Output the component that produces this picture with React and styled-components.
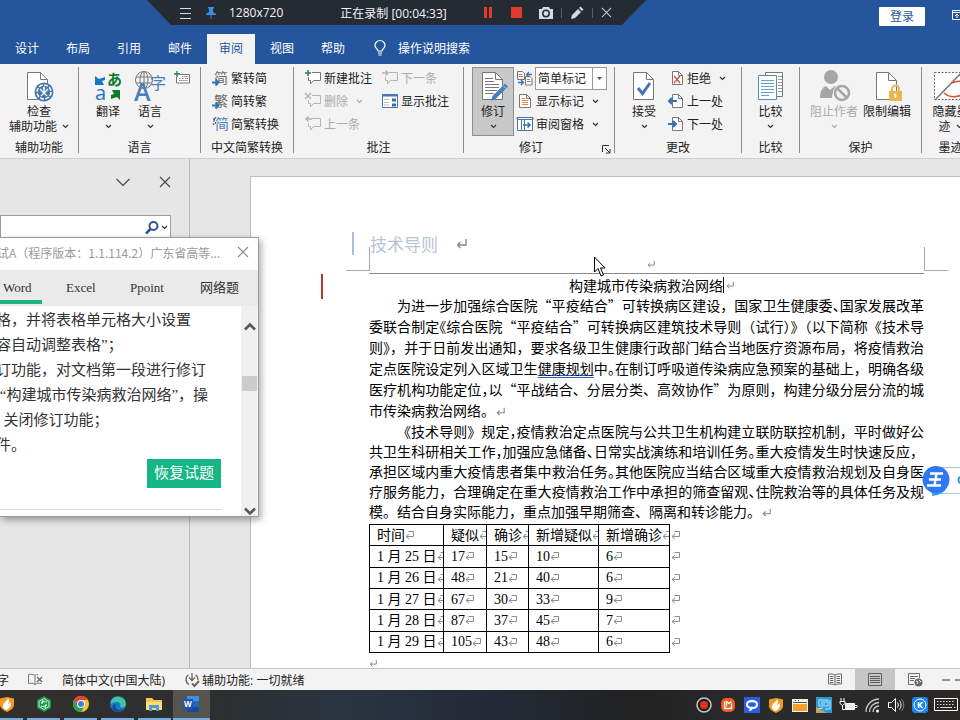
import React from "react";
import styled, { createGlobalStyle, css } from "styled-components";

const UI_FONT = `"Open Sans", "Noto Sans CJK SC", sans-serif`;
const DOC_FONT = `"Noto Sans CJK SC", sans-serif`;
const PAPER_FONT = `"Liberation Serif", "Noto Sans CJK SC", serif`;

const GlobalStyle = createGlobalStyle`
  * {
    box-sizing: border-box;
  }

  body {
    margin: 0;
    overflow: hidden;
    font-family: ${UI_FONT};
    font-size: 12px;
    color: #222;
  }

  button, input, select {
    font: inherit;
    color: inherit;
    margin: 0;
    padding: 0;
    border: 0;
    background: none;
  }

  svg {
    display: block;
    flex: none;
    overflow: visible;
  }
`;

const Screen = styled.div`
  position: relative;
  display: flex;
  flex-direction: column;
  height: 100vh;
  overflow: hidden;
  background: #e6e6e6;
`;

/* ---------- title bar and tabs ---------- */

const Header = styled.header`
  flex: none;
  background: #25569d;
  color: #fff;
`;

const TitleBar = styled.div`
  display: flex;
  justify-content: flex-end;
  gap: 27px;
  height: 34px;
  padding-top: 7px;
`;

const LoginButton = styled.button`
  width: 46px;
  height: 19px;
  line-height: 19px;
  border-radius: 1px;
  background: #fff;
  color: #25569d;
`;

const RibbonOptions = styled.button`
  width: 8px;
  height: 16px;
  overflow: hidden;
`;

const Tabs = styled.nav`
  display: flex;
  gap: 3px;
  height: 30px;
  padding-left: 3px;
`;

const Tab = styled.a`
  width: 48px;
  line-height: 29px;
  text-align: center;
  text-decoration: none;
  color: ${({ $active }) => ($active ? "#25569d" : "#fff")};
  background: ${({ $active }) => ($active ? "#f3f3f3" : "transparent")};
`;

const TellMe = styled.button`
  display: flex;
  align-items: center;
  gap: 12px;
  height: 28px;
  margin-left: 14px;
`;

/* ---------- screen recorder strip ---------- */

const Recorder = styled.div`
  position: absolute;
  top: 0;
  left: 147px;
  display: flex;
  align-items: center;
  width: 499px;
  height: 25px;
  padding-left: 32px;
  background: #252b33;
  color: #f4f4f4;
  clip-path: polygon(0 0, 100% 0, 475px 100%, 24px 100%);
`;

const RecorderIcon = styled.button`
  display: flex;
  width: 25px;
`;

const RecorderTime = styled.span`
  margin: 0 27px 0 57px;
  white-space: nowrap;
`;

const RecorderButton = styled.button`
  display: flex;
  align-items: center;
  justify-content: center;
  width: ${({ $wide }) => ($wide ? "31px" : "28px")};
  height: 10px;
  border-left: 1px solid ${({ $divided }) => ($divided ? "#59606a" : "transparent")};
`;

/* ---------- ribbon ---------- */

const RibbonBar = styled.div`
  flex: none;
  display: flex;
  height: 95px;
  padding: 3px 0 5px;
  overflow: hidden;
  background: #f3f3f3;
  border-bottom: 1px solid #cfcfcf;
`;

const Group = styled.section`
  flex: none;
  display: flex;
  flex-direction: column;
  width: ${({ $width }) => $width}px;
  border-right: 1px solid #8c8c8c;
`;

const GroupBody = styled.div`
  display: flex;
  height: 72px;
  padding-left: ${({ $pad }) => $pad || 0}px;
  justify-content: ${({ $center }) => ($center ? "center" : "flex-start")};
`;

const GroupLabel = styled.div`
  position: relative;
  height: 14px;
  line-height: 17px;
  padding-right: ${({ $launcher }) => ($launcher ? "16px" : 0)};
  text-align: center;
  white-space: nowrap;
`;

const Launcher = styled.button`
  position: absolute;
  right: 3px;
  bottom: -1px;
`;

const Column = styled.div`
  display: flex;
  flex-direction: column;
  gap: 1px;
  width: ${({ $width }) => ($width ? `${$width}px` : "auto")};
`;

const SmallButton = styled.button`
  display: flex;
  align-items: center;
  gap: 3px;
  height: 22px;
  white-space: nowrap;
  color: ${({ disabled }) => (disabled ? "#ababab" : "#222")};

  svg:last-child:not(:first-child) {
    margin-left: 5px;
  }
`;

const InsetButton = styled(SmallButton)`
  padding-left: 3px;
`;

const BigButton = styled.button`
  flex: none;
  display: flex;
  flex-direction: column;
  align-items: center;
  width: ${({ $width }) => $width || 42}px;
  height: 69px;
  padding-top: 4px;
  line-height: 15px;
  white-space: nowrap;
  color: ${({ disabled }) => (disabled ? "#ababab" : "#222")};

  > svg {
    margin-bottom: 1px;
  }

  ${({ $pressed }) =>
    $pressed &&
    css`
      background: #c8c8c8;
      box-shadow: inset 0 0 0 1px #8f8f8f;
    `}
`;

const SecondLine = styled.span`
  display: flex;
  align-items: center;
  gap: 5px;
  height: 15px;
`;

const Combo = styled.label`
  display: flex;
  align-items: center;
  width: 72px;
  height: 23px;
  margin-left: 2px;
  border: 1px solid #9a9a9a;
  background: #fff;

  select {
    width: 57px;
    height: 21px;
    padding-left: 2px;
    appearance: none;
    border-right: 1px solid #9a9a9a;
    outline: 0;
  }

  svg {
    margin-left: 4px;
  }
`;

const ComboRow = styled.div`
  display: flex;
  align-items: center;
  height: 22px;
  padding-left: 3px;
`;

/* ---------- work area ---------- */

const Workspace = styled.main`
  flex: 1;
  display: flex;
  min-height: 0;
  overflow: hidden;
`;

const TaskPane = styled.aside`
  flex: none;
  width: 190px;
  padding: 17px 18px 0 0;
  border-right: 1px solid #b9b9b9;
`;

const PaneActions = styled.div`
  display: flex;
  align-items: flex-start;
  justify-content: flex-end;
  gap: 29px;
  height: 39px;
`;

const SearchBox = styled.label`
  display: flex;
  align-items: center;
  height: 25px;
  padding-right: 2px;
  border: 1px solid #9b9b9b;
  background: #fff;

  input {
    flex: 1;
    min-width: 0;
    outline: 0;
  }
`;

const Canvas = styled.div`
  flex: 1;
  display: flex;
  padding: 17px 0 0 60px;
`;

const Page = styled.article`
  position: relative;
  flex: 1;
  min-width: 0;
  padding: 55px 36px 0 118px;
  border: 1px solid #bdbdbd;
  border-width: 1px 0 0 1px;
  background: #fff;
  font-family: ${DOC_FONT};
  font-size: 14px;
  color: #000;
`;

const PageHead = styled.div`
  display: flex;
  align-items: center;
  gap: 18px;
  height: 22px;
  padding-left: 1px;
  font-size: 17px;
  color: #b6c3d6;
`;

const HeadRule = styled.div`
  display: flex;
  justify-content: center;
  align-items: center;
  height: 20px;
  padding-left: 8px;
  border-bottom: 1px solid #8a8a8a;
`;

const Corner = styled.span`
  position: absolute;
  top: 70px;
  width: 24px;
  height: 24px;
  border: 0 solid #a9a9a9;
  border-bottom-width: 1px;
  ${({ $right }) =>
    $right
      ? "right: 12px; border-left-width: 1px;"
      : "left: 95px; border-right-width: 1px;"}
`;

const ChangeBar = styled.span`
  position: absolute;
  top: ${({ $top }) => $top}px;
  left: ${({ $left }) => $left}px;
  width: 2px;
  height: ${({ $height }) => $height}px;
  background: ${({ $color }) => $color};
`;

const DocTitle = styled.h1`
  display: flex;
  justify-content: center;
  align-items: center;
  gap: 2px;
  height: 21px;
  margin: 0;
  font-size: 14px;
  font-weight: 400;

  span {
    border-right: 1px solid #000;
    line-height: 16px;
  }

  svg {
    margin-right: -10px;
  }
`;

const Paragraph = styled.p`
  margin: 0;
  line-height: ${({ $leading }) => $leading}px;
`;

const Line = styled.span`
  display: block;
  height: ${({ $leading }) => $leading}px;
  padding-left: ${({ $indent }) => ($indent ? "28px" : 0)};
  white-space: nowrap;
  text-align: justify;
  text-align-last: ${({ $last }) => ($last ? "left" : "justify")};

  svg {
    display: inline-block;
    margin-left: 1px;
  }
`;

// half-width punctuation
const Half = styled.span`
  font-feature-settings: "halt";
`;

const Grammar = styled.span`
  text-decoration: underline double #2f62c9 1px;
  text-underline-offset: 1px;
`;

const DataTable = styled.table`
  height: 129px;
  margin-top: 3px;
  border-collapse: collapse;
  table-layout: fixed;
  width: 311px;
  font-family: ${PAPER_FONT};
  line-height: 19px;

  th,
  td {
    padding: 0 0 0 7px;
    border: 1px solid #000;
    font-weight: 400;
    text-align: left;
    white-space: nowrap;
    overflow: hidden;
  }

  td:last-child {
    padding: 0 0 0 1px;
    border: 0;
  }
`;

const Cell = styled.span`
  display: flex;
  align-items: center;
`;

const AfterTable = styled.div`
  padding-top: 6px;
`;

/* ---------- exam window ---------- */

const ExamWindow = styled.section`
  position: absolute;
  top: 237px;
  left: 0;
  display: flex;
  flex-direction: column;
  width: 259px;
  height: 280px;
  border: 1px solid #9c9c9c;
  border-left: 0;
  background: #fff;
  box-shadow: 2px 3px 7px rgba(0, 0, 0, 0.35);
  overflow: hidden;
`;

const ExamTitle = styled.div`
  display: flex;
  justify-content: space-between;
  align-items: center;
  height: 32px;
  padding: 0 9px 4px 0;
  margin-left: -3px;
  font-family: ${DOC_FONT};
  color: #9a9a9a;
  white-space: nowrap;
`;

const ExamTabs = styled.nav`
  display: flex;
  height: 36px;
  background: #eaeaea;
  font-family: ${PAPER_FONT};
  font-size: 13px;
`;

const ExamTab = styled.a`
  width: ${({ $width }) => $width}px;
  height: 34px;
  line-height: 36px;
  padding-left: ${({ $pad }) => $pad}px;
  border-bottom: 4px solid ${({ $active }) => ($active ? "#1db27f" : "transparent")};
  color: #333;
  text-decoration: none;
`;

const ExamBody = styled.div`
  flex: 1;
  display: flex;
  min-height: 0;
`;

const ExamText = styled.div`
  flex: 1;
  padding-top: 2px;
  margin-left: -4px;
  font-family: ${PAPER_FONT};
  font-size: 15px;
  line-height: 25px;
  color: #333;
  white-space: pre;
`;

const ExamFooter = styled.div`
  display: flex;
  justify-content: flex-end;
  height: 52px;
  margin-right: 20px;
  border-bottom: 1px solid #d8d8d8;
`;

const ResetButton = styled.button`
  width: 74px;
  height: 29px;
  line-height: 27px;
  margin-top: 1px;
  background: #14b783;
  color: #fff;
`;

const ScrollTrack = styled.div`
  display: flex;
  flex-direction: column;
  justify-content: space-between;
  align-items: center;
  width: 17px;
  padding: 16px 0 0;
  background: #f0f0f0;
`;

const ScrollThumb = styled.span`
  width: 15px;
  height: 15px;
  margin-bottom: 72px;
  background: #cbcbcb;
`;

/* ---------- input method badge, pointer ---------- */

const InputBadge = styled.div`
  position: absolute;
  top: 466px;
  right: 0;
  width: 38px;
  height: 31px;
`;

const Pointer = styled.svg`
  position: absolute;
  top: 256px;
  left: 593px;
`;

/* ---------- status bar ---------- */

const StatusBar = styled.footer`
  flex: none;
  display: flex;
  align-items: center;
  height: 22px;
  border-top: 1px solid #c4c4c4;
  background: #f3f3f3;
  white-space: nowrap;
  overflow: hidden;
`;

const StatusItem = styled.span`
  display: flex;
  align-items: center;
  gap: 2px;
  margin-right: 19px;

  &:first-child {
    margin-left: -3px;
  }
`;

const Views = styled.div`
  display: flex;
  align-self: stretch;
  margin-left: auto;
`;

const ViewButton = styled.button`
  display: flex;
  align-items: center;
  justify-content: center;
  width: 40px;
  background: ${({ $active }) => ($active ? "#c6c6c6" : "transparent")};
`;

const ZoomPart = styled.span`
  display: flex;
  align-items: center;
  width: 25px;
  padding-left: 7px;
`;

/* ---------- taskbar ---------- */

const Taskbar = styled.div`
  flex: none;
  display: flex;
  justify-content: space-between;
  height: 30px;
  background: linear-gradient(90deg, #322e2c 0, #2c2f31 24%, #2a3542 36%, #232a38 50%, #222222 66%, #2a2b2e 80%, #2a2826 100%);
  overflow: hidden;
`;

const Apps = styled.div`
  display: flex;
  margin-left: -12px;
`;

const AppButton = styled.button`
  display: flex;
  align-items: center;
  justify-content: center;
  width: 37px;
  border-bottom: 2px solid #76abe0;
  border-image: linear-gradient(90deg, transparent 4px, #76abe0 4px, #76abe0 33px, transparent 33px) 2;
  ${({ $active }) => $active && "background: #55544f; border-image: none;"}
`;

const Tray = styled.div`
  display: flex;
  align-items: center;
`;

const TrayButton = styled.button`
  display: flex;
  justify-content: center;
  width: 24px;

  &:last-child {
    width: 28px;
  }
`;

/* ---------- icons ---------- */

const Icon = ({ w = 16, h = 16, box, children, ...rest }) => (
  <svg width={w} height={h} viewBox={box || `0 0 ${w} ${h}`} fill="none" aria-hidden="true" {...rest}>
    {children}
  </svg>
);

const Chevron = ({ color = "#333" }) => (
  <Icon w={7} h={5}>
    <path d="M1 1l2.5 2.5L6 1" stroke={color} strokeWidth="1.2" />
  </Icon>
);

const ReturnMark = ({ size = 8 }) => (
  <Icon w={size} h={size} box="0 0 11 11">
    <path d="M10 1v6H1.5M4.5 4l-3 3 3 3" stroke="#858585" strokeWidth="1.3" />
  </Icon>
);

const CellMark = () => (
  <Icon w={9} h={10}>
    <path d="M3.5 1.5h5v5H1M4 4L1 6.5 4 9" stroke="#8c8c8c" />
  </Icon>
);

const Sheet = ({ w, h, fold }) => (
  <>
    <path d={`M.5 .5h${w - fold - 1}l${fold} ${fold}v${h - fold - 1}H.5z`} fill="#fff" stroke="#777" />
    <path d={`M${w - fold - 0.5} .5v${fold}h${fold}`} stroke="#777" />
  </>
);

const CheckAccessIcon = () => (
  <Icon w={30} h={32}>
    <g transform="translate(3 1)">
      <Sheet w={21} h={28} fold={7} />
    </g>
    <circle cx="20" cy="21" r="9.5" fill="#4878ae" />
    <circle cx="20" cy="21" r="7" stroke="#fff" strokeWidth="1.5" strokeDasharray="4 1.5" />
    <circle cx="20" cy="17" r="1.2" fill="#fff" />
    <path d="M20 17v5M16 18l3 3h2l3-3M20 22l-3 3M20 22l3 3" stroke="#fff" strokeWidth="1.3" />
  </Icon>
);

const TranslateIcon = () => (
  <Icon w={28} h={32}>
    <path d="M1 5l4 3 6-2v3l-3 1 2 4H1z" fill="#1677c8" />
    <path d="M26 29l-3-3-6 2v-4l3-1-2-4h8z" fill="#0d7a2c" />
    <text x="1" y="29" fontSize="20" fill="#1677c8" fontFamily="Open Sans">a</text>
    <text x="13" y="14" fontSize="15" fontWeight="700" fill="#0d7a2c" fontFamily="Noto Sans CJK JP">あ</text>
  </Icon>
);

const LanguageIcon = () => (
  <Icon w={32} h={32}>
    <circle cx="10" cy="9" r="8.5" stroke="#777" />
    <ellipse cx="10" cy="9" rx="4" ry="8.5" stroke="#777" />
    <path d="M2 6h16M2 12h16M10 1v17" stroke="#777" />
    <text x="0" y="30" fontSize="25" fontWeight="600" fill="#4a7fba" fontFamily="Open Sans">A</text>
    <text x="16" y="18" fontSize="16" fill="#4a7fba" fontFamily="Noto Sans CJK SC">字</text>
  </Icon>
);

const KeyboardAddIcon = () => (
  <Icon w={17} h={14}>
    <path d="M6 3.5h9.500v8.500H2.500V6" fill="#fff" stroke="#777" />
    <path d="M5 7.500h2M8 7.500h2M11 7.500h3M5 9.500h9M8 5.500h6" stroke="#888" strokeDasharray="1.5 .6" />
    <path d="M3 0v6M0 3h6" stroke="#2f7d5b" strokeWidth="1.4" />
  </Icon>
);

const ConvertIcon = ({ char, blue }) => (
  <Icon>
    <text x={blue ? 3 : 2} y="13" fontSize="14" fill={blue ? "#4a7fba" : "#6b6b6b"} fontFamily="Noto Sans CJK SC">
      {char}
    </text>
    {blue ? (
      <path d="M2 2v4M4 1L2 4M1 7l1 2M4 6L3 8" stroke="#444" />
    ) : (
      <path d="M0 12.500h6M3.500 9.500l3 3-3 3" stroke="#3272bd" strokeWidth="2" />
    )}
  </Icon>
);

const CommentIcon = ({ kind, dim }) => {
  const tone = dim ? "#b4b4b4" : "#777";
  return (
    <Icon>
      <path d="M7 2.500h8.500v8H8.500l-3 3.500v-3.500h-2V7" fill={dim ? "none" : "#fff"} stroke={tone} />
      {kind === "add" && <path d="M3 0v6M0 3h6" stroke="#2f7d5b" strokeWidth="1.5" />}
      {kind === "delete" && <path d="M0 0l6 6M6 0L0 6" stroke={tone} strokeWidth="1.5" />}
      {kind === "next" && <path d="M0 3h6M3.500 .5L6 3 3.500 5.500" stroke={tone} strokeWidth="1.5" />}
      {kind === "prev" && <path d="M7 3H1M3.500 .5L1 3l2.500 2.500" stroke={tone} strokeWidth="1.5" />}
    </Icon>
  );
};

const ShowCommentsIcon = () => (
  <Icon>
    <path d="M.5 1.500h15v13H.5z" fill="#fff" stroke="#4a76a8" />
    <path d="M0 1.500h16v2H0z" fill="#4a76a8" />
    <path d="M2 6.500h5M2 9.500h5M2 12h5" stroke="#bbb" />
    <path d="M10 5.500h4v3h-4zM10 10.500h4v3h-4z" fill="#2d6fb5" />
  </Icon>
);

const TrackIcon = () => (
  <Icon w={30} h={32}>
    <g transform="translate(4 1)">
      <Sheet w={21} h={28} fold={7} />
      <path d="M3 9.500h9M3 12.500h14M3 15.500h14M3 18.500h12M3 21.500h9M3 6.500h8" stroke="#777" />
    </g>
    <path d="M13 30l1.500-5L27 12.500l3 3L17.500 28z" fill="#4a7dbb" />
    <path d="M25 14.500l3 3" stroke="#c8c8c8" />
  </Icon>
);

const MarkupIcon = () => (
  <Icon>
    <path d="M.5 1.500h5l2 2v6h-7zM8.500 6.500h4.500l2 2v6.500H8.500z" fill="#fff" stroke="#777" />
    <path d="M2 4.500h3M2 6.500h4M10 9.500h3M10 11.500h4" stroke="#e0703c" />
    <path d="M15 4.500H10M12 2l-2.500 2.500L12 7M1 12.500h5M4 10l2.500 2.500L4 15" stroke="#3272bd" strokeWidth="1.3" />
  </Icon>
);

const ShowMarkupIcon = () => (
  <Icon>
    <g transform="translate(2 1)">
      <Sheet w={12} h={14} fold={4} />
      <path d="M3 4.500h3M3 6.500h6M3 8.500h6M3 10.500h6" stroke="#e08a4a" />
    </g>
  </Icon>
);

const PaneIcon = () => (
  <Icon>
    <path d="M.5 1.500h15v13H.5z" fill="#fff" stroke="#4a76a8" />
    <path d="M0 1.500h16v2H0zM4.500 4v10M7.500 4v10" stroke="#4a76a8" />
    <path d="M6 9h7M10.500 6.500L13 9l-2.500 2.500" stroke="#3272bd" strokeWidth="1.5" />
  </Icon>
);

const AcceptIcon = () => (
  <Icon w={24} h={32}>
    <g transform="translate(1 1)">
      <Sheet w={21} h={28} fold={7} />
    </g>
    <path d="M6 17l4.500 5.500L18 12" stroke="#3f74b5" strokeWidth="3" />
  </Icon>
);

const SmallSheetIcon = ({ kind }) => (
  <Icon>
    <g transform="translate(4 1)">
      <Sheet w={11} h={14} fold={4} />
    </g>
    {kind === "reject" && <path d="M6 6l6 7M12 6l-6 7" stroke="#d9532c" strokeWidth="1.3" />}
    {kind === "prev" && <path d="M9 8H1M4 5L1 8l3 3" stroke="#3272bd" strokeWidth="2" />}
    {kind === "next" && <path d="M0 8h8M5 5l3 3-3 3" stroke="#3272bd" strokeWidth="2" />}
  </Icon>
);

const CompareIcon = () => (
  <Icon w={28} h={32}>
    <path d="M8.500 1.500h17v24h-17z" fill="#fff" stroke="#777" />
    <path d="M21 5.500h4M21 8.500h4M21 11.500h4M21 14.500h4M21 17.500h4M21 20.500h4" stroke="#999" />
    <path d="M1.500 4.500h18v24h-18z" fill="#fff" stroke="#4f8fc0" />
    <path d="M4 9.500h13M4 12.500h13M4 15.500h13M4 18.500h13M4 21.500h13M4 24.500h8" stroke="#6ba0c8" />
  </Icon>
);

const BlockAuthorsIcon = () => (
  <Icon w={32} h={32}>
    <circle cx="13" cy="6" r="7" fill="#a6a6a6" />
    <path d="M2 27c0-8 3-11 6-12l4 4 5-4c2 0 3 1 4 2-4 1-7 4-7 10z" fill="#a6a6a6" />
    <circle cx="24" cy="22" r="9" fill="#f3f3f3" />
    <circle cx="24" cy="22" r="7" stroke="#a6a6a6" strokeWidth="2.5" />
    <path d="M19 17l10 10" stroke="#a6a6a6" strokeWidth="2.5" />
  </Icon>
);

const RestrictIcon = () => (
  <Icon w={28} h={32}>
    <g transform="translate(3 1)">
      <Sheet w={21} h={28} fold={8} />
    </g>
    <path d="M19 21v-3a3.500 3.500 0 017 0v3" stroke="#ecb64f" strokeWidth="2" />
    <path d="M16 20h13v10H16z" fill="#ecb64f" />
    <path d="M22.500 23v4M21 23.500h2" stroke="#fff" strokeWidth="1.5" />
  </Icon>
);

const InkIcon = () => (
  <Icon w={34} h={32}>
    <path d="M.5 1.500h33v27H.5z" fill="#fff" stroke="#666" strokeDasharray="2 1.5" />
    <path d="M1 29L28 1" stroke="#777" strokeWidth="1.5" />
    <path d="M18 12c6-3 12-2 15 2M10 22c6 5 14 4 20 1" stroke="#d9532c" strokeWidth="1.5" />
  </Icon>
);

const BulbIcon = () => (
  <Icon w={12} h={16}>
    <path d="M4 11c0-2-3-3-3-5.500a5 5 0 0110 0C11 8 8 9 8 11zM4 13h4M4.500 15h3" stroke="#fff" strokeWidth="1.2" />
  </Icon>
);

const CloseIcon = ({ size = 12, color = "#444" }) => (
  <Icon w={size} h={size} box="0 0 12 12">
    <path d="M1 1l10 10M11 1L1 11" stroke={color} strokeWidth="1.1" />
  </Icon>
);

const ProofIcon = () => (
  <Icon w={15} h={13}>
    <path d="M7 2.500C5 1 3 1 .5 1.500v9c2.500-.5 4.500-.5 6.500 1V2.500c1-1 2-1 3-1M7 11.500c2-1.500 3-1.500 6.500-1" stroke="#777" />
    <path d="M9 4l5 5M14 4L9 9" stroke="#666" strokeWidth="1.2" />
  </Icon>
);

const AccessIcon = () => (
  <Icon>
    <path d="M4.500 3A5.500 5.500 0 005 12.500M11.500 3A5.500 5.500 0 0114 8M8 1v7M5 5.500L8 8.500l3-3" stroke="#666" strokeWidth="1.3" />
    <path d="M8 11.500l2.500 2.500L15 9" stroke="#666" strokeWidth="2" />
  </Icon>
);

const ReadViewIcon = () => (
  <Icon w={14} h={13}>
    <path d="M7 2C5 .8 3 .8.500 1v10c2.500 0 4.500 0 6.500 1 2-1 4-1 6.500-1V1C11 .8 9 .8 7 2zv10M2 3.500h3.500M2 5.500h3.500M2 7.500h3.500M2 9.500h3.500M8.500 3.500H12M8.500 5.500H12M8.500 7.500H12M8.500 9.500H12" stroke="#6a6a6a" />
  </Icon>
);

const PrintViewIcon = () => (
  <Icon w={14} h={13}>
    <path d="M.5 .5h13v12H.5zM2 3.500h10M2 5.500h10M2 7.500h10M2 9.500h10" stroke="#5c5c5c" />
  </Icon>
);

const WebViewIcon = () => (
  <Icon w={15} h={14}>
    <path d="M6 11.500H.5V.5h11V5M2 3.500h8M2 5.500h5M2 7.500h4" stroke="#6a6a6a" />
    <circle cx="10.5" cy="9.5" r="4" fill="#6a6a6a" />
    <path d="M8 8l2 1-1 2M11 7l2 2" stroke="#f3f3f3" />
  </Icon>
);

const ShieldIcon = () => (
  <Icon>
    <path d="M1 2.500l7-1.500 7 1.500V9c0 3-3 5-7 7-4-2-7-4-7-7z" fill="#f39a1f" />
    <path d="M7 14c-4-2-4-5-1-8 2-2 3-3 3-4 2 2 1 4 0 6 1 0 1.500-1 2-2 2 3 0 7-4 8z" fill="#fff" />
  </Icon>
);

const HexIcon = () => (
  <Icon>
    <path d="M8 0l7 4v8l-7 4-7-4V4z" fill="#15964a" />
    <path d="M8 2.500l5 3v5l-5 3-5-3v-5z" stroke="#c9f2d5" />
    <path d="M5 7c2-2 4-1 6-1M5 10c2 1 4 0 6-1M7 4l-1 4M10 8l-1 4" stroke="#fff" />
  </Icon>
);

const ChromeIcon = () => (
  <Icon>
    <circle cx="8" cy="8" r="8" fill="#f7c52f" />
    <path d="M1.070 4A8 8 0 0114.930 4H8L4.500 10z" fill="#e24435" />
    <path d="M1.070 4A8 8 0 008 16l3.500-6-7 0z" fill="#2ba24c" />
    <circle cx="8" cy="8" r="4" fill="#fff" />
    <circle cx="8" cy="8" r="3" fill="#3f7fe8" />
  </Icon>
);

const EdgeIcon = () => (
  <Icon>
    <circle cx="8" cy="8" r="8" fill="#1b78c9" />
    <path d="M1 5a8 8 0 0115 3c0 3-3 4-6 3 1-1 1-5-3-5-3 0-5 1-6 2z" fill="#3cc8a0" />
    <path d="M6 8c-2 4 2 8 8 5a8 8 0 01-9 2C1 13 2 8 6 8z" fill="#114d96" />
  </Icon>
);

const FolderIcon = () => (
  <Icon w={17}>
    <path d="M0 2h6l2 2h8v10H0z" fill="#f5c64b" />
    <path d="M0 6h16v8H0z" fill="#fbdc7e" />
    <path d="M3 15V9h10v6h-3v-3H6v3z" fill="#4f9bd6" />
  </Icon>
);

const WordIcon = () => (
  <Icon w={17}>
    <path d="M4 0h12v16H4z" fill="#3f8fdf" />
    <path d="M4 5h12v6H4z" fill="#2565bd" />
    <path d="M4 11h12v5H4z" fill="#174b96" />
    <path d="M0 3h10v10H0z" fill="#1d55ab" />
    <text x="1" y="11" fontSize="8" fontWeight="700" fill="#fff" fontFamily="Open Sans">W</text>
  </Icon>
);

const tray = {
  record: (
    <Icon>
      <circle cx="8" cy="8" r="7" fill="#1e1e1e" stroke="#c9c9c9" strokeWidth="1.5" />
      <circle cx="8" cy="8" r="4" fill="#e03228" />
    </Icon>
  ),
  orange: (
    <Icon>
      <rect x="1" y="1" width="14" height="14" rx="5" fill="#ec5a1e" />
      <path d="M4.500 4.500v7h7v-5M6.500 9.500v-5l2.500 2 2.500-2" stroke="#fff" strokeWidth="1.3" />
    </Icon>
  ),
  chat: (
    <Icon>
      <path d="M0 0h16v16H0z" fill="#2a5ee8" />
      <path d="M8 3c4 0 6 2 6 4.500S12 12 8.500 12c-1 2-3 2-4 2 1-1 1.500-1.500 1-2.500C3 11 2 9.500 2 7.500 2 5 4 3 8 3z" fill="#fff" />
      <ellipse cx="8" cy="7.5" rx="4" ry="2.3" fill="#2a5ee8" />
    </Icon>
  ),
  shield: <ShieldIcon />,
  panel: (
    <Icon w={16} h={13}>
      <path d="M0 0h16v13H0z" fill="#f6f1e6" />
      <path d="M1 5h14v7H1z" fill="#f3a02c" />
      <path d="M1 3.500h14M3 1.500h1M6 1.500h1" stroke="#555" />
    </Icon>
  ),
  picture: (
    <Icon>
      <path d="M0 0h16v16H0z" fill="#2b9bd6" />
      <path d="M0 16V10l5 3 6 3z" fill="#c9a35b" />
      <path d="M3 3h9v6H3zM5 5h6M5 7h4M9 12h5V3M2 12l5-1" stroke="#bfe8fa" />
    </Icon>
  ),
  battery: (
    <Icon w={17} h={14}>
      <path d="M5.500 5.500h9v6h-9z" fill="#e9e9e9" stroke="#fff" />
      <path d="M15 7.500h2v2h-2M1 0v3M4 0v3M0 3.500h5v2l-2.500 2-2.500-2zM2.500 7v4.500h3" stroke="#fff" />
    </Icon>
  ),
  wifi: (
    <Icon w={15} h={15}>
      <path d="M1 14A13 13 0 0114 1M4.500 14A9.500 9.500 0 0114 4.500M8 14a6 6 0 016-6" stroke="#c9c9c9" strokeWidth="1.3" />
      <circle cx="12.5" cy="13" r="1.5" fill="#fff" />
    </Icon>
  ),
  sound: (
    <Icon>
      <path d="M.5 5.500h3l4-4v13l-4-4h-3z" stroke="#fff" />
      <path d="M9.500 5.500c1 1.500 1 3.500 0 5M11.500 3.500c2 2.500 2 6.500 0 9" stroke="#fff" />
      <path d="M13.500 2c3 3.500 3 8.500 0 12" stroke="#888" />
    </Icon>
  ),
  k: (
    <Icon>
      <rect width="16" height="16" rx="3" fill="#1c83ee" />
      <circle cx="8" cy="8" r="6" stroke="#fff" />
      <path d="M6.500 5v6M10.500 5l-3 3 3 3" stroke="#fff" strokeWidth="1.7" />
    </Icon>
  ),
  keyboard: (
    <Icon w={24} h={14}>
      <path d="M.5 .5h23v12H.5z" stroke="#fff" />
      <path d="M3 3.500h18M3 6.500h18" stroke="#ddd" strokeDasharray="1.5 1.5" />
      <path d="M6 9.500h12M3 9.500h1.500M20 9.500h1.500" stroke="#ddd" />
    </Icon>
  ),
};

/* ---------- content ---------- */

const tabs = ["设计", "布局", "引用", "邮件", "审阅", "视图", "帮助"];

const firstParagraph = [
  <>为进一步加强综合医院“平疫结合”可转换病区建设，国家卫生健康委<Half>、</Half>国家发展改革</>,
  <>委联合制定<Half>《</Half>综合医院“平疫结合”可转换病区建筑技术导则（试行）》（以下简称《技术导</>,
  <>则》，并于日前发出通知，要求各级卫生健康行政部门结合当地医疗资源布局，将疫情救治</>,
  <>定点医院设定列入区域卫生<Grammar>健康规划</Grammar>中<Half>。</Half>在制订呼吸道传染病应急预案的基础上，明确各级</>,
  <>医疗机构功能定位<Half>，</Half>以“平战结合、分层分类、高效协作”为原则，构建分级分层分流的城</>,
  <>市传染病救治网络。</>,
];

const secondParagraph = [
  <>《技术导则》规定<Half>，</Half>疫情救治定点医院与公共卫生机构建立联防联控机制，平时做好公</>,
  <>共卫生科研相关工作<Half>，</Half>加强应急储备<Half>、</Half>日常实战演练和培训任务<Half>。</Half>重大疫情发生时快速反应，</>,
  <>承担区域内重大疫情患者集中救治任务<Half>。</Half>其他医院应当结合区域重大疫情救治规划及自身医</>,
  <>疗服务能力，合理确定在重大疫情救治工作中承担的筛查留观<Half>、</Half>住院救治等的具体任务及规</>,
  <>模。结合自身实际能力，重点加强早期筛查、隔离和转诊能力。</>,
];

const columns = [
  ["时间", 74],
  ["疑似", 43],
  ["确诊", 42],
  ["新增疑似", 70],
  ["新增确诊", 71],
];

const rows = [
  ["1 月 25 日", 17, 15, 10, 6],
  ["1 月 26 日", 48, 21, 40, 6],
  ["1 月 27 日", 67, 30, 33, 9],
  ["1 月 28 日", 87, 37, 45, 7],
  ["1 月 29 日", 105, 43, 48, 6],
];

const examLines = [
  "格，并将表格单元格大小设置",
  "容自动调整表格”；",
  "订功能，对文档第一段进行修订",
  " “构建城市传染病救治网络”，操",
  "  关闭修订功能；",
  "件。",
];

const DocParagraph = ({ lines, leading }) => (
  <Paragraph $leading={leading}>
    {lines.map((line, i) => (
      <Line key={i} $leading={leading} $indent={i === 0} $last={i === lines.length - 1}>
        {line}
        {i === lines.length - 1 && <ReturnMark size={9} />}
      </Line>
    ))}
  </Paragraph>
);

const Ribbon = () => (
  <RibbonBar>
    <Group $width={79}>
      <GroupBody $center>
        <BigButton $width={70}>
          <CheckAccessIcon />
          检查
          <SecondLine>
            辅助功能 <Chevron />
          </SecondLine>
        </BigButton>
      </GroupBody>
      <GroupLabel>辅助功能</GroupLabel>
    </Group>

    <Group $width={122}>
      <GroupBody $pad={8}>
        <BigButton>
          <TranslateIcon />
          翻译
          <SecondLine>
            <Chevron />
          </SecondLine>
        </BigButton>
        <BigButton>
          <LanguageIcon />
          语言
          <SecondLine>
            <Chevron />
          </SecondLine>
        </BigButton>
        <InsetButton aria-label="更新输入法">
          <KeyboardAddIcon />
        </InsetButton>
      </GroupBody>
      <GroupLabel>语言</GroupLabel>
    </Group>

    <Group $width={93}>
      <GroupBody $pad={11}>
        <Column>
          <SmallButton><ConvertIcon char="简" />繁转简</SmallButton>
          <SmallButton><ConvertIcon char="繁" />简转繁</SmallButton>
          <SmallButton><ConvertIcon char="简" blue />简繁转换</SmallButton>
        </Column>
      </GroupBody>
      <GroupLabel>中文简繁转换</GroupLabel>
    </Group>

    <Group $width={170}>
      <GroupBody $pad={11}>
        <Column $width={77}>
          <SmallButton><CommentIcon kind="add" />新建批注</SmallButton>
          <SmallButton disabled>
            <CommentIcon kind="delete" dim />删除 <Chevron color="#ababab" />
          </SmallButton>
          <SmallButton disabled><CommentIcon kind="prev" dim />上一条</SmallButton>
        </Column>
        <Column>
          <SmallButton disabled><CommentIcon kind="next" dim />下一条</SmallButton>
          <SmallButton><ShowCommentsIcon />显示批注</SmallButton>
        </Column>
      </GroupBody>
      <GroupLabel>批注</GroupLabel>
    </Group>

    <Group $width={151}>
      <GroupBody $pad={8}>
        <BigButton $pressed>
          <TrackIcon />
          修订
          <SecondLine>
            <Chevron />
          </SecondLine>
        </BigButton>
        <Column $width={93}>
          <ComboRow>
            <MarkupIcon />
            <Combo>
              <select aria-label="显示以供审阅" defaultValue="简单标记">
                <option>简单标记</option>
                <option>所有标记</option>
              </select>
              <Icon w={5} h={3}>
                <path d="M0 0h5L2.500 3z" fill="#555" />
              </Icon>
            </Combo>
          </ComboRow>
          <InsetButton><ShowMarkupIcon />显示标记<Chevron /></InsetButton>
          <InsetButton><PaneIcon />审阅窗格 <Chevron /></InsetButton>
        </Column>
      </GroupBody>
      <GroupLabel $launcher>
        修订
        <Launcher aria-label="修订选项">
          <Icon w={9} h={9}>
            <path d="M.5 7V.5H7M3 3l5 5M8 4v4H4" stroke="#333" />
          </Icon>
        </Launcher>
      </GroupLabel>
    </Group>

    <Group $width={127}>
      <GroupBody $pad={8}>
        <BigButton>
          <AcceptIcon />
          接受
          <SecondLine>
            <Chevron />
          </SecondLine>
        </BigButton>
        <Column>
          <InsetButton><SmallSheetIcon kind="reject" />拒绝<Chevron /></InsetButton>
          <InsetButton><SmallSheetIcon kind="prev" />上一处</InsetButton>
          <InsetButton><SmallSheetIcon kind="next" />下一处</InsetButton>
        </Column>
      </GroupBody>
      <GroupLabel>更改</GroupLabel>
    </Group>

    <Group $width={58}>
      <GroupBody $center>
        <BigButton>
          <CompareIcon />
          比较
          <SecondLine>
            <Chevron />
          </SecondLine>
        </BigButton>
      </GroupBody>
      <GroupLabel>比较</GroupLabel>
    </Group>

    <Group $width={122}>
      <GroupBody $center>
        <BigButton $width={53} disabled>
          <BlockAuthorsIcon />
          阻止作者
          <SecondLine>
            <Chevron color="#ababab" />
          </SecondLine>
        </BigButton>
        <BigButton $width={53}>
          <RestrictIcon />
          限制编辑
        </BigButton>
      </GroupBody>
      <GroupLabel>保护</GroupLabel>
    </Group>

    <Group $width={58}>
      <GroupBody $center>
        <BigButton>
          <InkIcon />
          隐藏墨
          <SecondLine>
            迹 <Chevron />
          </SecondLine>
        </BigButton>
      </GroupBody>
      <GroupLabel>墨迹</GroupLabel>
    </Group>
  </RibbonBar>
);

const Document = () => (
  <Page>
    <ChangeBar $top={55} $left={101} $height={23} $color="#a9bfdb" />
    <ChangeBar $top={97} $left={70} $height={25} $color="#b03a2e" />
    <Corner />
    <Corner $right />
    <PageHead>
      技术导则 <ReturnMark size={11} />
    </PageHead>
    <HeadRule>
      <ReturnMark />
    </HeadRule>
    <DocTitle>
      <span>构建城市传染病救治网络</span>
      <ReturnMark />
    </DocTitle>
    <DocParagraph lines={firstParagraph} leading={21} />
    <DocParagraph lines={secondParagraph} leading={20} />
    <DataTable>
      <colgroup>
        {columns.map(([name, width]) => (
          <col key={name} width={width} />
        ))}
        <col width={11} />
      </colgroup>
      <tbody>
        <tr>
          {columns.map(([name]) => (
            <th key={name} scope="col">
              <Cell>{name}<CellMark /></Cell>
            </th>
          ))}
          <td><CellMark /></td>
        </tr>
        {rows.map((row) => (
          <tr key={row[0]}>
            {row.map((value, i) => (
              <td key={i}>
                <Cell>{value}<CellMark /></Cell>
              </td>
            ))}
            <td><CellMark /></td>
          </tr>
        ))}
      </tbody>
    </DataTable>
    <AfterTable>
      <ReturnMark />
    </AfterTable>
  </Page>
);

const App = () => (
  <Screen>
    <GlobalStyle />
    <Header>
      <TitleBar>
        <LoginButton>登录</LoginButton>
        <RibbonOptions aria-label="功能区显示选项">
          <Icon w={16} h={16}>
            <path d="M.5 3.500h15v9H.5zM0 5.500h16M5 11V7M3 9l2-2 2 2" stroke="#fff" />
          </Icon>
        </RibbonOptions>
      </TitleBar>
      <Tabs>
        {tabs.map((name) => (
          <Tab key={name} href="#" $active={name === "审阅"}>
            {name}
          </Tab>
        ))}
        <TellMe>
          <BulbIcon />
          操作说明搜索
        </TellMe>
      </Tabs>
    </Header>

    <Ribbon />

    <Workspace>
      <TaskPane>
        <PaneActions>
          <button aria-label="选项">
            <Icon w={14} h={12}>
              <path d="M.5 3L7 9.500 13.500 3" stroke="#444" strokeWidth="1.1" />
            </Icon>
          </button>
          <button aria-label="关闭">
            <CloseIcon />
          </button>
        </PaneActions>
        <SearchBox>
          <input type="text" aria-label="搜索文档" />
          <Icon w={17} h={14}>
            <circle cx="9.5" cy="5" r="4" stroke="#2f549c" strokeWidth="2" />
            <path d="M6.500 8L2 12.500" stroke="#2f549c" strokeWidth="2.5" />
          </Icon>
          <Chevron />
        </SearchBox>
      </TaskPane>
      <Canvas>
        <Document />
      </Canvas>
    </Workspace>

    <StatusBar>
      <StatusItem>字</StatusItem>
      <StatusItem><ProofIcon /></StatusItem>
      <StatusItem>简体中文(中国大陆)</StatusItem>
      <StatusItem><AccessIcon />辅助功能: 一切就绪</StatusItem>
      <Views>
        <ViewButton aria-label="阅读视图"><ReadViewIcon /></ViewButton>
        <ViewButton $active aria-label="页面视图"><PrintViewIcon /></ViewButton>
        <ViewButton aria-label="Web 版式视图"><WebViewIcon /></ViewButton>
        <ZoomPart>
          <Icon w={21} h={2}>
            <path d="M0 1h8M13 1h8" stroke="#333" />
          </Icon>
        </ZoomPart>
      </Views>
    </StatusBar>

    <Taskbar>
      <Apps>
        <AppButton aria-label="安全卫士"><ShieldIcon /></AppButton>
        <AppButton aria-label="考试系统"><HexIcon /></AppButton>
        <AppButton aria-label="Chrome"><ChromeIcon /></AppButton>
        <AppButton aria-label="Edge"><EdgeIcon /></AppButton>
        <AppButton aria-label="资源管理器"><FolderIcon /></AppButton>
        <AppButton $active aria-label="Word"><WordIcon /></AppButton>
      </Apps>
      <Tray>
        {Object.keys(tray).map((name) => (
          <TrayButton key={name} aria-label={name}>
            {tray[name]}
          </TrayButton>
        ))}
      </Tray>
    </Taskbar>

    <Recorder>
      <RecorderIcon aria-label="菜单">
        <Icon w={14} h={14}>
          <path d="M1 2.500h11M1 7.500h11M1 12.500h11" stroke="#ddd" />
        </Icon>
      </RecorderIcon>
      <RecorderIcon aria-label="置顶">
        <Icon w={14} h={14}>
          <path d="M4 1h6v1l-1 1v3l3 2v1H2V8l3-2V3L4 2z" fill="#3f8fe0" />
          <path d="M7 9v4" stroke="#3f8fe0" />
        </Icon>
      </RecorderIcon>
      <span>1280x720</span>
      <RecorderTime>正在录制 [00:04:33]</RecorderTime>
      <RecorderButton aria-label="暂停">
        <Icon w={8} h={11}>
          <path d="M0 0h3v11H0zM5 0h3v11H5z" fill="#e23a2c" />
        </Icon>
      </RecorderButton>
      <RecorderButton aria-label="停止">
        <Icon w={11} h={11}>
          <path d="M0 0h11v11H0z" fill="#e23a2c" />
        </Icon>
      </RecorderButton>
      <RecorderButton $wide aria-label="截图">
        <Icon w={16} h={14}>
          <path d="M1 3h3l1-2h6l1 2h3v10H1z" fill="#d8dade" />
          <circle cx="8" cy="7.5" r="3.2" stroke="#252b33" strokeWidth="1.5" />
        </Icon>
      </RecorderButton>
      <RecorderButton $wide $divided aria-label="画笔">
        <Icon w={14} h={14}>
          <path d="M1 13l1-4 6-6 3 3-6 6zM9 2l1.500-1.500 3 3L12 5z" fill="#d8dade" />
        </Icon>
      </RecorderButton>
      <RecorderButton $divided aria-label="关闭录制">
        <CloseIcon size={11} color="#ccc" />
      </RecorderButton>
    </Recorder>

    <ExamWindow>
      <ExamTitle>
        <span>试A（程序版本：1.1.114.2）广东省高等...</span>
        <button aria-label="关闭窗口">
          <CloseIcon color="#888" />
        </button>
      </ExamTitle>
      <ExamTabs>
        <ExamTab href="#" $active $width={42} $pad={3}>Word</ExamTab>
        <ExamTab href="#" $width={64} $pad={24}>Excel</ExamTab>
        <ExamTab href="#" $width={70} $pad={24}>Ppoint</ExamTab>
        <ExamTab href="#" $width={64} $pad={24}>网络题</ExamTab>
      </ExamTabs>
      <ExamBody>
        <ExamText>
          {examLines.map((line) => (
            <div key={line}>{line}</div>
          ))}
          <ExamFooter>
            <ResetButton>恢复试题</ResetButton>
          </ExamFooter>
        </ExamText>
        <ScrollTrack>
          <Icon w={12} h={9}>
            <path d="M1 7.500l5-5 5 5" stroke="#555" strokeWidth="2.5" />
          </Icon>
          <ScrollThumb />
          <Icon w={12} h={9}>
            <path d="M1 1.500l5 5 5-5" stroke="#555" strokeWidth="2.5" />
          </Icon>
        </ScrollTrack>
      </ExamBody>
    </ExamWindow>

    <InputBadge>
      <Icon w={38} h={31}>
        <path d="M14 1.500h25v26H14z" fill="#fff" stroke="#a9c8ec" />
        <path d="M6 24c4 3 5 4 4 6 8-1 13-4 15-9z" fill="#2f9bf5" />
        <circle cx="14" cy="13.5" r="13.5" fill="#2f78f0" />
        <path d="M8 7.500h13M7 13.500h12M5 19.500h14M14.500 7.500l-2 12" stroke="#fff" strokeWidth="2.5" />
        <path d="M38 11c-2 1-2 5 0 6" stroke="#28a3c4" strokeWidth="2" />
      </Icon>
    </InputBadge>

    <Pointer width="14" height="22" viewBox="0 0 14 22" aria-hidden="true">
      <path d="M1.500 1v15l3.500-3.500 3 7.500 2.500-1-3-7h4.500z" fill="#fff" stroke="#000" />
    </Pointer>
  </Screen>
);

export default App;
